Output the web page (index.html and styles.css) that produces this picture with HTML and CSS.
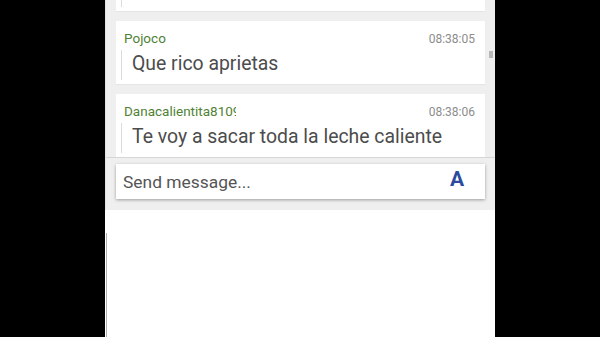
FILE: index.html
```html
<!DOCTYPE html>
<html lang="es">
<head>
<meta charset="utf-8"/>
<meta content="width=device-width, initial-scale=1.0" name="viewport"/>
<title>Chat</title>
<link rel="stylesheet" href="styles.css">
</head>
<body>
<div class="phone">
<!-- Chat -->
<div class="chat">
<div class="mensajes">
<div class="mensaje">
<div class="cabecera"></div>
<div class="texto"></div>
</div>
<div class="mensaje">
<div class="cabecera"><span class="nombre">Pojoco</span><span class="hora">08:38:05</span></div>
<div class="texto">Que rico aprietas</div>
</div>
<div class="mensaje">
<div class="cabecera"><span class="nombre">Danacalientita8109</span><span class="hora">08:38:06</span></div>
<div class="texto">Te voy a sacar toda la leche caliente</div>
</div>
<div class="scroll-thumb"></div>
</div>
<div class="envio">
<div class="caja-envio">
<span class="placeholder">Send message...</span>
<span class="btn-fuente">A</span>
</div>
</div>
</div>
<!-- Zona inferior -->
<div class="inferior">
<div class="linea"></div>
</div>
</div>
</body>
</html>
```

FILE: styles.css
```css
:root {
  --color-fondo: #efeff0;
  --color-nombre: #4f8236;
  --color-hora: #8c8c8c;
  --color-texto: #4c4c4c;
  --color-boton: #2c4b9e;
}

* {
  box-sizing: border-box;
  font-family: Roboto, 'Noto Sans', sans-serif;
}

body {
  margin: 0;
  background: #000;
  display: flex;
  justify-content: center;
  height: 337px;
  overflow: hidden;
}

.phone {
  width: 390px;
  height: 337px;
  background: #fff;
  display: flex;
  flex-direction: column;
}

.chat {
  background: var(--color-fondo);
  height: 210px;
  border-left: 1px solid #e2e2e4;
}

.mensajes {
  position: relative;
  height: 158px;
  padding: 0 10px 0 10px;
  display: flex;
  flex-direction: column;
  justify-content: flex-end;
  gap: 10px;
  overflow: hidden;
  border-bottom: 1px solid #d6d6d8;
}

.mensaje {
  flex-shrink: 0;
  height: 63px;
  background: #fff;
  padding: 9px 10px 4px 8px;
  box-shadow: 0 1px 1px rgba(0,0,0,0.04);
}

.cabecera {
  display: flex;
  justify-content: space-between;
  align-items: baseline;
  height: 17px;
  line-height: 17px;
}

.nombre {
  color: var(--color-nombre);
  font-size: 13.5px;
  max-width: 112px;
  overflow: hidden;
  white-space: nowrap;
}

.hora {
  color: var(--color-hora);
  font-size: 12px;
}

.texto {
  margin: 3px 0 0 -3px;
  height: 30px;
  border-left: 1px solid #dcdcdc;
  padding-left: 10px;
  font-size: 19.4px;
  line-height: 28px;
  color: var(--color-texto);
  white-space: nowrap;
}

.scroll-thumb {
  position: absolute;
  right: 2px;
  top: 51px;
  width: 4px;
  height: 7px;
  background: #b8b8b8;
}

.envio {
  padding: 6px 10px 0 10px;
}

.caja-envio {
  height: 35px;
  background: #fff;
  display: flex;
  align-items: center;
  justify-content: space-between;
  padding: 0 21px 0 7px;
  box-shadow: 0 1px 3px rgba(0,0,0,0.35);
}

.placeholder {
  font-size: 17.4px;
  color: #555;
}

.btn-fuente {
  font-size: 21px;
  font-weight: bold;
  color: var(--color-boton);
  margin-top: -6px;
}

.inferior {
  flex: 1;
  padding-top: 23px;
}

.linea {
  height: 100%;
  margin-left: 1px;
  border-left: 1px solid #b0b0b0;
}
```
